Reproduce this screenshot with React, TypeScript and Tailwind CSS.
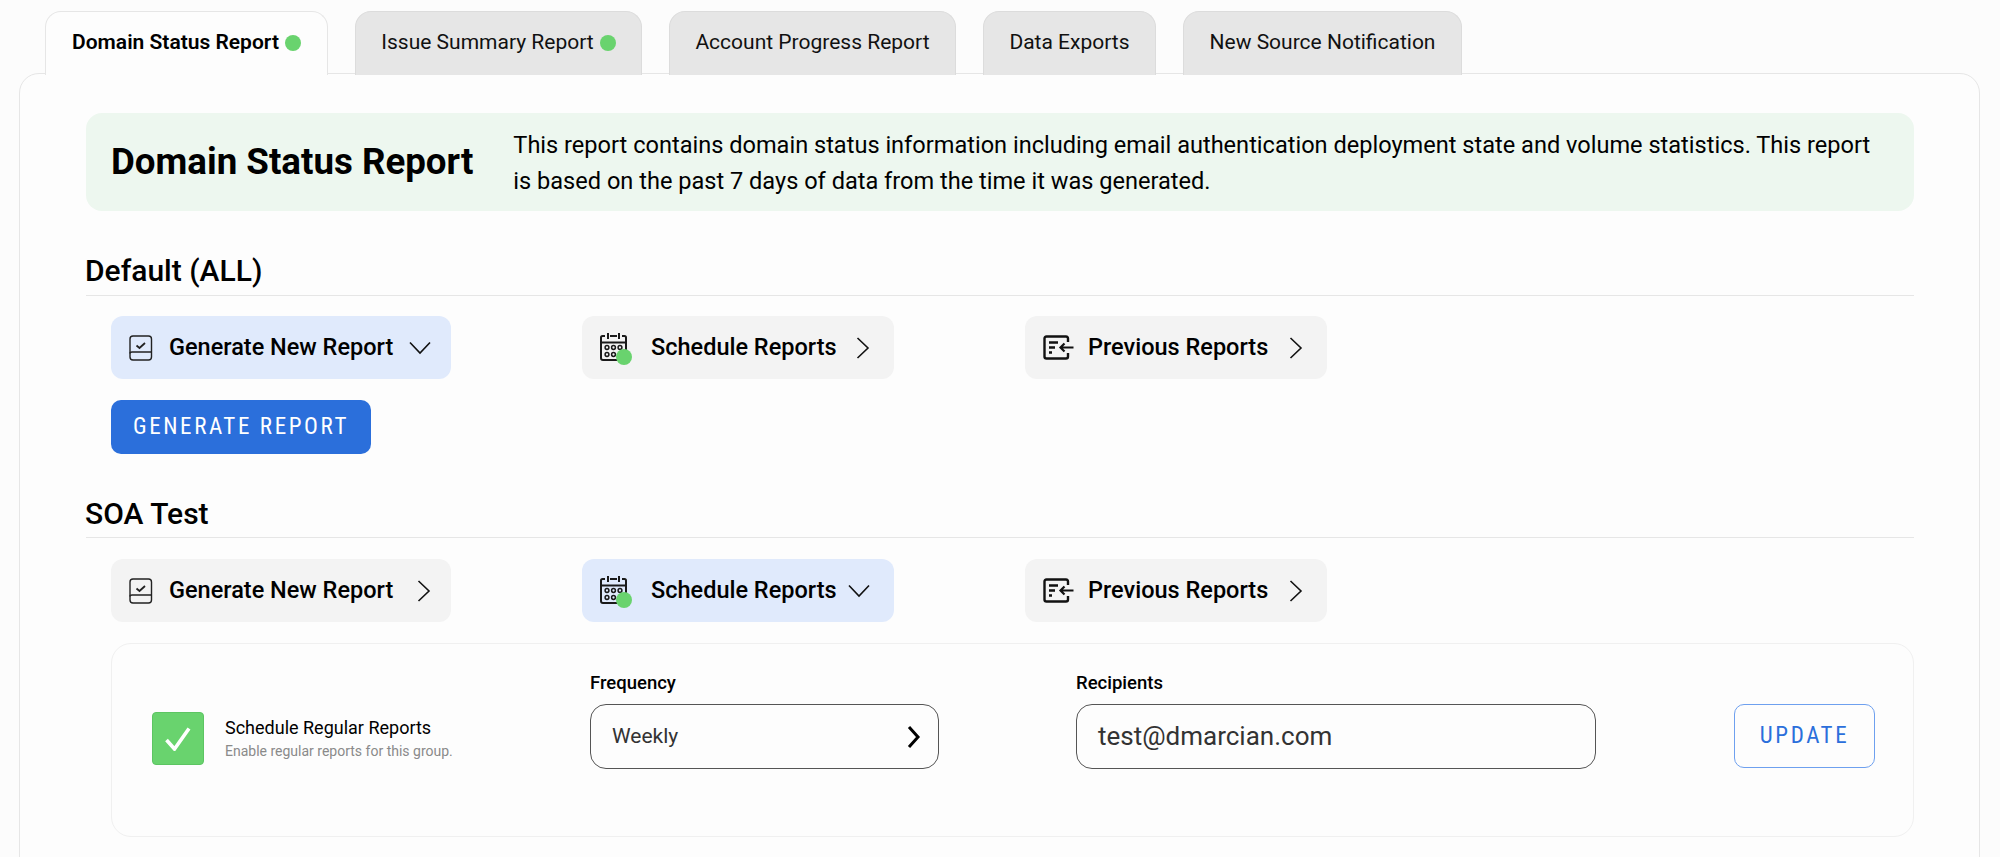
import { useState } from "react";

const tabs = [
  { label: "Domain Status Report", dot: true, w: "w-[283px]" },
  { label: "Issue Summary Report", dot: true, w: "w-[287px]" },
  { label: "Account Progress Report", dot: false, w: "w-[287px]" },
  { label: "Data Exports", dot: false, w: "w-[173px]" },
  { label: "New Source Notification", dot: false, w: "w-[279px]" },
];

const ChevronRight = () => (
  <svg width="14" height="24" viewBox="0 0 14 24" fill="none" stroke="#111" strokeWidth="1.6">
    <path d="M1.5 2 L12 12 L1.5 22" />
  </svg>
);

const ChevronDown = () => (
  <svg width="22" height="14" viewBox="0 0 22 14" fill="none" stroke="#111" strokeWidth="1.6">
    <path d="M1 1.5 L11 12 L21 1.5" />
  </svg>
);

const BookCheckIcon = () => (
  <svg width="24" height="26" viewBox="0 0 24 26" fill="none" stroke="#222" strokeWidth="1.4">
    <rect x="1" y="1" width="21.5" height="24" rx="3" />
    <path d="M1 18.5 Q1 17 3 17 H22.5" />
    <path d="M7.5 10.5 L10.5 13 L16 8" strokeWidth="1.8" />
  </svg>
);

const CalendarIcon = () => (
  <span className="relative flex w-[32px] h-[32px] shrink-0">
    <svg width="27" height="29" viewBox="0 0 27 29" fill="none" stroke="#1a1a1a" strokeWidth="2">
      <path d="M5 4 H2.5 Q1 4 1 5.5 V26 Q1 28 3 28 H24 Q26 28 26 26 V5.5 Q26 4 24.5 4 H22" />
      <path d="M8 1 V7 M19 1 V7 M10 4 H17" />
      <path d="M1 10.5 H26" />
      <circle cx="7" cy="15.5" r="1.9" strokeWidth="1.5" />
      <circle cx="13.5" cy="15.5" r="1.9" strokeWidth="1.5" />
      <circle cx="20" cy="15.5" r="1.9" strokeWidth="1.5" />
      <circle cx="7" cy="22.5" r="1.9" strokeWidth="1.5" />
      <circle cx="13.5" cy="22.5" r="1.9" strokeWidth="1.5" />
    </svg>
    <span className="absolute right-0 bottom-[-1px] w-[16px] h-[16px] rounded-full bg-[#69d36e]" />
  </span>
);

const PreviousIcon = () => (
  <svg width="31" height="25" viewBox="0 0 31 25" fill="none" stroke="#111" strokeWidth="2.4">
    <path d="M25 7 V3.5 Q25 1.5 23 1.5 H3.5 Q1.5 1.5 1.5 3.5 V21.5 Q1.5 23.5 3.5 23.5 H23 Q25 23.5 25 21.5 V18" />
    <path d="M6 7.5 H15 M6 12.5 H12 M6 17.5 H9" />
    <path d="M30.5 12.5 H18 M21.5 8.5 L17.5 12.5 L21.5 16.5" strokeWidth="2.2" />
  </svg>
);

type ReportButtonProps = {
  label: string;
  icon: React.ReactNode;
  open?: boolean;
  className: string;
};

const ReportButton = ({ label, icon, open, className }: ReportButtonProps) => (
  <button
    className={`flex items-center h-[63px] rounded-[12px] text-[23.5px] font-medium text-black ${
      open ? "bg-[#e0eafc]" : "bg-[#f3f3f3]"
    } ${className}`}
  >
    {icon}
    <span className="whitespace-nowrap pt-[1px]">{label}</span>
    <span className="flex items-center ml-auto">{open ? <ChevronDown /> : <ChevronRight />}</span>
  </button>
);

type GroupRowProps = { open: "generate" | "schedule" };

const GroupRow = ({ open }: GroupRowProps) => (
  <div className="grid grid-cols-[471px_443px_auto] justify-items-start pl-[25px]">
    <ReportButton
      label="Generate New Report"
      icon={<span className="flex w-[40px] ml-[18px] shrink-0"><BookCheckIcon /></span>}
      open={open === "generate"}
      className="w-[340px] pr-[20px]"
    />
    <ReportButton
      label="Schedule Reports"
      icon={<span className="flex ml-[18px] mr-[19px]"><CalendarIcon /></span>}
      open={open === "schedule"}
      className="w-[312px] pr-[24px]"
    />
    <ReportButton
      label="Previous Reports"
      icon={<span className="flex ml-[18px] mr-[14px]"><PreviousIcon /></span>}
      className="w-[302px] pr-[24px]"
    />
  </div>
);

const App = () => {
  const [active] = useState(0);

  return (
    <div className="h-[857px] overflow-hidden bg-[#fcfcfc] pt-[11px] pl-[19px] pr-[20px] font-['Roboto',sans-serif]">
      <div className="relative z-10 flex gap-[27px] pl-[26px] -mb-[2px]">
        {tabs.map((tab, i) => (
          <div
            key={tab.label}
            className={`flex items-center justify-center gap-[6px] h-[64px] pb-[1px] border border-b-0 rounded-t-[16px] text-[21px] whitespace-nowrap ${tab.w} ${
              i === active
                ? "bg-[#fdfdfd] border-[#e6e6e6] font-semibold text-black"
                : "bg-[#e6e6e6] border-[#dcdcdc] text-[#111]"
            }`}
          >
            {tab.label}
            {tab.dot && <span className="w-[16px] h-[16px] rounded-full bg-[#69d36e]" />}
          </div>
        ))}
      </div>

      <div className="h-[800px] border border-[#e6e6e6] rounded-t-[20px] bg-[#fdfdfd] pl-[66px] pr-[65px] pt-[39px]">
        <div className="flex items-center h-[98px] pl-[25px] rounded-[16px] bg-[#edf7ef]">
          <h1 className="text-[36.7px] font-bold text-black whitespace-nowrap">Domain Status Report</h1>
          <p className="ml-[40px] pt-[1px] w-[1370px] text-[23.57px] leading-[36px] text-black">
            This report contains domain status information including email authentication deployment state and volume statistics. This report is based on the past 7 days of data from the time it was generated.
          </p>
        </div>

        <h2 className="mt-[41px] -ml-[1px] text-[30px] leading-[38px] font-medium text-black">Default (ALL)</h2>
        <div className="mt-[5px] mb-[20px] border-t border-[#e6e6e6]" />
        <GroupRow open="generate" />
        <div className="pl-[25px] mt-[21px]">
          <button className="w-[260px] h-[54px] rounded-[10px] bg-[#2b6fdb] text-white text-[23px] tracking-[2.6px] [font-stretch:condensed]">
            GENERATE REPORT
          </button>
        </div>

        <h2 className="mt-[41px] -ml-[1px] text-[30px] leading-[38px] font-medium text-black">SOA Test</h2>
        <div className="mt-[4px] mb-[21px] border-t border-[#e6e6e6]" />
        <GroupRow open="schedule" />

        <div className="flex items-start ml-[25px] mt-[21px] h-[194px] border border-[#f0f0f0] rounded-[20px] pl-[40px] pt-[29px]">
          <div className="flex items-center w-[438px] mt-[39px]">
            <div className="flex items-center justify-center w-[52px] h-[53px] rounded-[4px] border border-[#5cc562] bg-[#69d36e]">
              <svg width="26" height="24" viewBox="0 0 26 24" fill="none" stroke="#fff" strokeWidth="3.6">
                <path d="M1.5 13 L9.5 22 L24 1.5" />
              </svg>
            </div>
            <div className="ml-[21px]">
              <div className="text-[18px] leading-[24px] text-black">Schedule Regular Reports</div>
              <div className="text-[14px] leading-[22px] text-[#8a8a8a]">Enable regular reports for this group.</div>
            </div>
          </div>

          <div className="w-[486px]">
            <label className="block text-[18.5px] leading-[20px] font-medium text-black mb-[11px]">Frequency</label>
            <div className="flex items-center justify-between w-[349px] h-[65px] px-[21px] pr-[17px] rounded-[16px] border border-[#555]">
              <span className="text-[21px] text-[#333]">Weekly</span>
              <svg width="14" height="24" viewBox="0 0 14 24" fill="none" stroke="#000" strokeWidth="3">
                <path d="M2 2 L11 12 L2 22" />
              </svg>
            </div>
          </div>

          <div className="w-[658px]">
            <label className="block text-[18.5px] leading-[20px] font-medium text-black mb-[11px]">Recipients</label>
            <div className="flex items-center w-[520px] h-[65px] px-[21px] rounded-[16px] border border-[#555]">
              <span className="text-[26px] text-[#333]">test@dmarcian.com</span>
            </div>
          </div>

          <button className="w-[141px] h-[64px] mt-[31px] rounded-[10px] border border-[#6ea0ef] text-[#2b6fdb] text-[23px] tracking-[2.6px] [font-stretch:condensed]">
            UPDATE
          </button>
        </div>
      </div>
    </div>
  );
};

export default App;
